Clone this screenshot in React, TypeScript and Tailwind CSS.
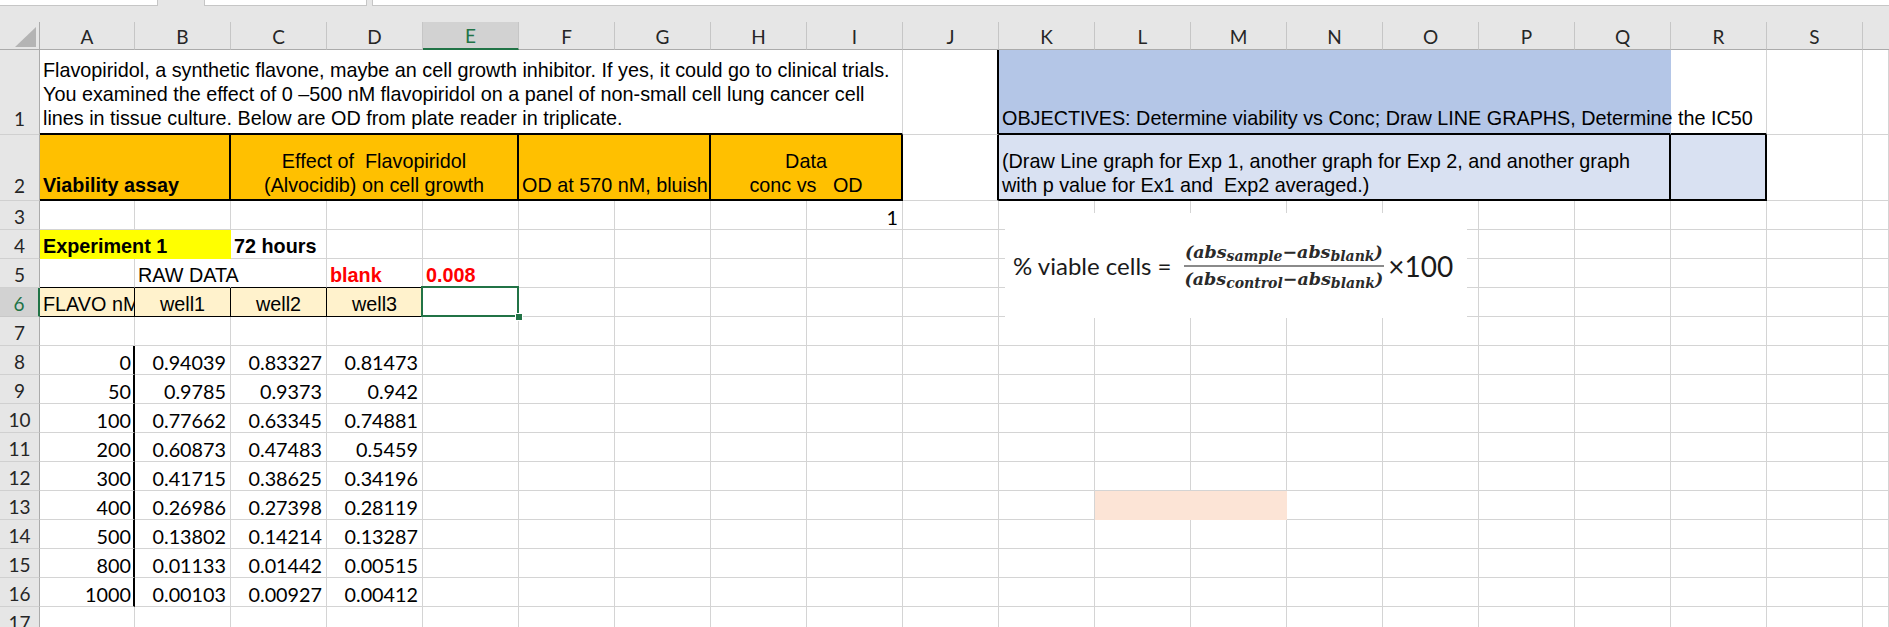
import React from 'react';
import { twMerge } from 'tailwind-merge';

type Spec = { span?: number; w?: string; cls?: string; c?: React.ReactNode };

const LETTERS = 'ABCDEFGHIJKLMNOPQRS'.split('');
const NUM = "font-['Lato',sans-serif] justify-end pr-[4px]";
const ORANGE = 'bg-[#ffc000] border-r-2 border-r-black border-b-2 border-b-black pb-[2px]';
const LBLUE = 'bg-[#d9e1f2] border-r-2 border-r-black border-b-2 border-b-black pb-[2px]';
const WELL = 'bg-[#fff2cc] border-r-black border-b-black';

const DATA: [number, string, string, string][] = [
  [0, '0.94039', '0.83327', '0.81473'],
  [50, '0.9785', '0.9373', '0.942'],
  [100, '0.77662', '0.63345', '0.74881'],
  [200, '0.60873', '0.47483', '0.5459'],
  [300, '0.41715', '0.38625', '0.34196'],
  [400, '0.26986', '0.27398', '0.28119'],
  [500, '0.13802', '0.14214', '0.13287'],
  [800, '0.01133', '0.01442', '0.00515'],
  [1000, '0.00103', '0.00927', '0.00412'],
];

function Cell({ w, cls, c }: Spec) {
  return (
    <div
      className={twMerge(
        'shrink-0 h-full flex items-end border-r border-b border-r-[#d4d4d4] border-b-[#d4d4d4] px-[3px] whitespace-nowrap',
        w,
        cls
      )}
    >
      {c}
    </div>
  );
}

function Row({ n, h, pb = '', sel, cells = [] }: { n: number; h: string; pb?: string; sel?: boolean; cells?: Spec[] }) {
  const used = cells.reduce((s, c) => s + (c.span ?? 1), 0);
  const all: Spec[] = [...cells, ...Array.from({ length: 19 - used }, () => ({}))];
  return (
    <div className={`flex w-full ${h}`}>
      <div
        className={
          sel
            ? `w-[40px] shrink-0 h-full flex items-end justify-center bg-[#d2d2d2] border-b border-r-2 border-r-[#217346] border-b-[#c8c8c8] text-[#217346] text-[19px] font-['Lato',sans-serif] ${pb}`
            : `w-[40px] shrink-0 h-full flex items-end justify-center bg-[#e6e6e6] border-b border-r border-r-[#ababab] border-b-[#d0d0d0] text-[#262626] text-[19px] font-['Lato',sans-serif] ${pb}`
        }
      >
        {n}
      </div>
      {all.map((s, i) => (
        <Cell key={i} {...s} w={s.w ?? (i === 0 ? 'w-[95px]' : 'w-[96px]')} />
      ))}
      <Cell w="flex-1 shrink" />
    </div>
  );
}

function blanks(k: number): Spec[] {
  return Array.from({ length: k }, () => ({}));
}

function Formula() {
  return (
    <div className="absolute left-[1005px] top-[213px] w-[462px] h-[105px] bg-white flex items-center pl-[8px] text-[#1a1a1a] whitespace-nowrap">
      <span className="shrink-0 font-['Lato',sans-serif] text-[24px] leading-none">% viable cells =</span>
      <div className="shrink-0 ml-[12px] flex flex-col items-center font-['DejaVu_Serif',serif] italic font-bold text-[17.5px] leading-[21px] text-[#2a2a2a]">
        <div className="px-[1px]">
          (abs<sub className="text-[14px]">sample</sub>−abs<sub className="text-[14px]">blank</sub>)
        </div>
        <div className="my-[2px] h-[2px] w-full bg-[#8a8a8a]" />
        <div className="px-[1px]">
          (abs<sub className="text-[14px]">control</sub>−abs<sub className="text-[14px]">blank</sub>)
        </div>
      </div>
      <span className="shrink-0 ml-[4px] font-['Lato',sans-serif] text-[28px] leading-none">×100</span>
    </div>
  );
}

export default function App() {
  return (
    <div className="relative w-[1889px] h-[627px] overflow-hidden bg-white text-black text-[19.8px] leading-[24px] font-['Liberation_Sans',Arial,sans-serif]">
      {/* ribbon edge / formula bar */}
      <div className="bg-[#e6e6e6]">
        <div className="flex h-[6px]">
          <div className="w-[158px] bg-white border-b border-r border-[#c6c6c6]" />
          <div className="w-[46px]" />
          <div className="w-[163px] bg-white border-b border-x border-[#c6c6c6]" />
          <div className="w-[5px]" />
          <div className="flex-1 bg-white border-b border-l border-[#c6c6c6]" />
        </div>
        <div className="h-[16px]" />

        {/* column headers */}
        <div className="flex h-[28px] font-['Lato',sans-serif] text-[19px] text-[#262626]">
          <div className="w-[40px] shrink-0 border-r border-b border-r-[#ababab] border-b-[#ababab] flex items-end justify-end pr-[3px] pb-[2px]">
            <svg width="21" height="20" viewBox="0 0 21 20">
              <polygon points="21,0 21,20 0,20" fill="#b4b4b4" />
            </svg>
          </div>
          {LETTERS.map((l, i) =>
            l === 'E' ? (
              <div
                key={l}
                className="w-[96px] shrink-0 flex items-center justify-center pt-[2px] border-r border-r-[#c6c6c6] border-b-2 border-b-[#217346] bg-[#d2d2d2] text-[#217346]"
              >
                {l}
              </div>
            ) : (
              <div
                key={l}
                className={`${i === 0 ? 'w-[95px]' : 'w-[96px]'} shrink-0 flex items-center justify-center pt-[2px] border-r border-b border-r-[#c6c6c6] border-b-[#ababab]`}
              >
                {l}
              </div>
            )
          )}
          <div className="flex-1 border-b border-b-[#ababab]" />
        </div>
      </div>

      {/* sheet */}
      <Row
        n={1}
        h="h-[85px]"
        pb="pb-[3px]"
        cells={[
          {
            span: 9,
            w: 'w-[863px]',
            cls: 'border-b-2 border-b-black pb-[3px]',
            c: (
              <div>
                Flavopiridol, a synthetic flavone, maybe an cell growth inhibitor. If yes, it could go to clinical trials.
                <br />
                You examined the effect of 0 –500 nM flavopiridol on a panel of non-small cell lung cancer cell
                <br />
                lines in tissue culture. Below are OD from plate reader in triplicate.
              </div>
            ),
          },
          { cls: 'border-r-2 border-r-black' },
          {
            span: 7,
            w: 'w-[672px]',
            cls: 'bg-[#b4c6e7] border-r-transparent border-b-2 border-b-black pb-[3px] relative z-10',
            c: 'OBJECTIVES: Determine viability vs Conc; Draw LINE GRAPHS, Determine the IC50',
          },
          { cls: 'border-b-2 border-b-black' },
        ]}
      />
      <Row
        n={2}
        h="h-[66px]"
        pb="pb-[2px]"
        cells={[
          { span: 2, w: 'w-[191px]', cls: `${ORANGE} font-bold`, c: 'Viability assay' },
          {
            span: 3,
            w: 'w-[288px]',
            cls: ORANGE,
            c: (
              <div className="w-full text-center whitespace-pre">
                <div>Effect of  Flavopiridol</div>
                <div>(Alvocidib) on cell growth</div>
              </div>
            ),
          },
          { span: 2, w: 'w-[192px]', cls: ORANGE, c: 'OD at 570 nM, bluish' },
          {
            span: 2,
            w: 'w-[192px]',
            cls: ORANGE,
            c: (
              <div className="w-full text-center whitespace-pre">
                <div>Data</div>
                <div>conc vs   OD</div>
              </div>
            ),
          },
          { cls: 'border-r-2 border-r-black' },
          {
            span: 7,
            w: 'w-[672px]',
            cls: LBLUE,
            c: (
              <div className="whitespace-pre">
                <div>(Draw Line graph for Exp 1, another graph for Exp 2, and another graph</div>
                <div>with p value for Ex1 and  Exp2 averaged.)</div>
              </div>
            ),
          },
          { cls: LBLUE },
        ]}
      />
      <Row n={3} h="h-[29px]" cells={[...blanks(8), { cls: NUM, c: '1' }]} />
      <Row
        n={4}
        h="h-[29px]"
        cells={[
          { span: 2, w: 'w-[191px]', cls: 'bg-[#ffff00] border-r-transparent border-b-transparent font-bold', c: 'Experiment 1' },
          { cls: 'font-bold', c: '72 hours' },
        ]}
      />
      <Row
        n={5}
        h="h-[29px]"
        cells={[
          { cls: 'border-b-black' },
          { cls: 'border-r-transparent border-b-black', c: 'RAW DATA' },
          { cls: 'border-b-black' },
          { cls: 'border-b-black text-[#ff0000] font-bold', c: 'blank' },
          { cls: 'text-[#ff0000] font-bold', c: '0.008' },
        ]}
      />
      <Row
        n={6}
        h="h-[29px]"
        sel
        cells={[
          { cls: `${WELL} overflow-hidden`, c: 'FLAVO nM' },
          { cls: `${WELL} justify-center`, c: 'well1' },
          { cls: `${WELL} justify-center`, c: 'well2' },
          { cls: `${WELL} justify-center`, c: 'well3' },
          {
            cls: 'relative',
            c: (
              <>
                <div className="absolute left-[-2px] top-[-2px] right-[-1px] bottom-[-1px] border-2 border-[#217346] z-10" />
                <div className="absolute right-[-5px] bottom-[-5px] w-[8px] h-[8px] bg-[#217346] border border-white z-20" />
              </>
            ),
          },
        ]}
      />
      <Row n={7} h="h-[29px]" />
      {DATA.map(([a, b, c, d], i) => (
        <Row
          key={a}
          n={8 + i}
          h="h-[29px]"
          cells={[
            { cls: `${NUM} border-r-2 border-r-black pr-[2px]`, c: a },
            { cls: NUM, c: b },
            { cls: NUM, c: c },
            { cls: NUM, c: d },
            ...(i === 5
              ? [...blanks(7), { span: 2, w: 'w-[192px]', cls: 'bg-[#fce4d6] border-r-transparent border-b-transparent' }]
              : []),
          ]}
        />
      ))}
      <Row n={17} h="h-[29px]" />

      <Formula />
    </div>
  );
}
